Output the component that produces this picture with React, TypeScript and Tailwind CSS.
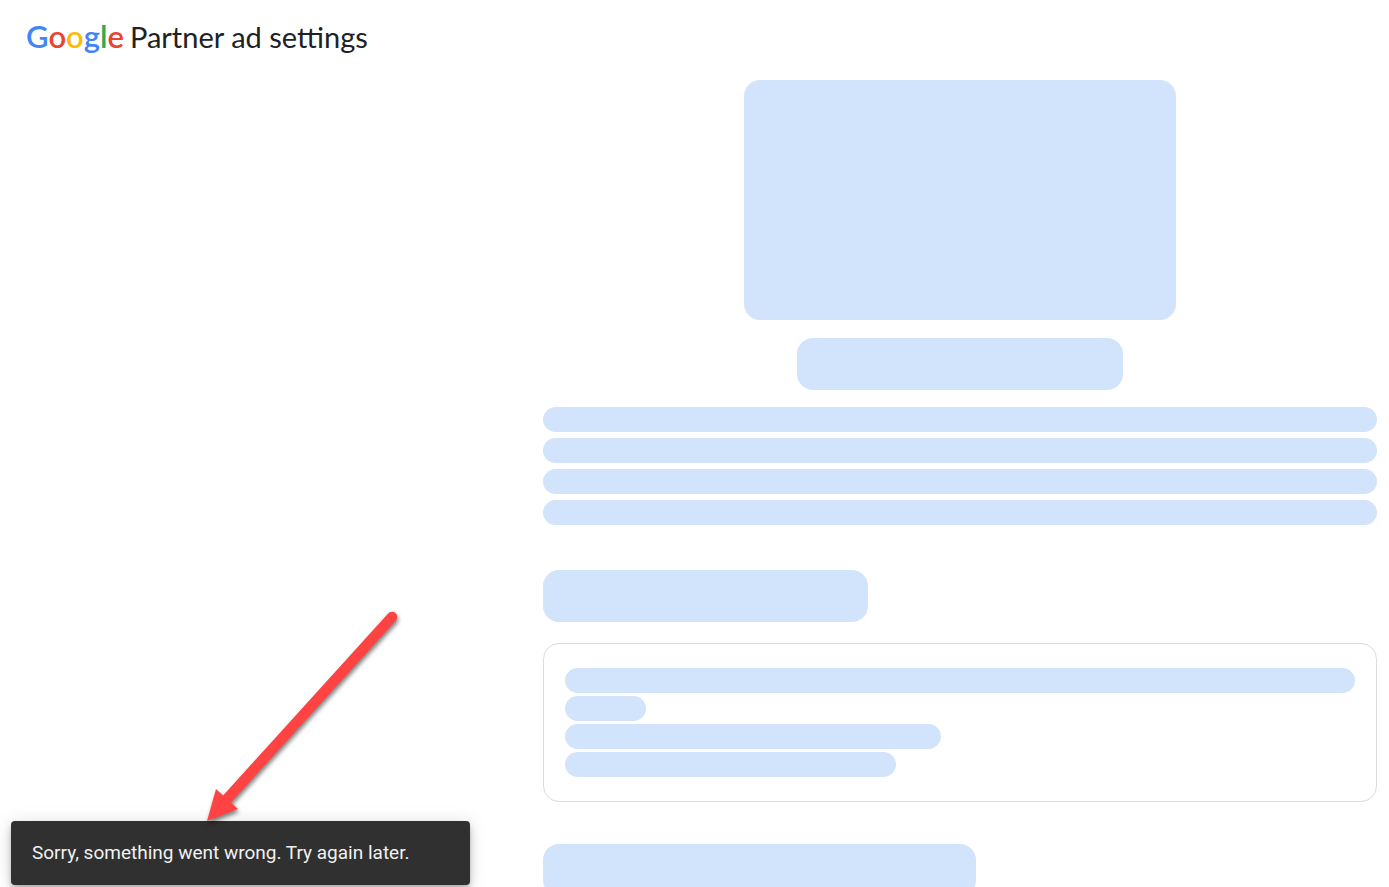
import clsx from 'clsx';

interface SkeletonProps {
  className?: string;
}

const LOGO_LETTERS = [
  { char: 'G', color: 'text-[#4285f4]' },
  { char: 'o', color: 'text-[#ea4335]' },
  { char: 'o', color: 'text-[#fbbc05]' },
  { char: 'g', color: 'text-[#4285f4]' },
  { char: 'l', color: 'text-[#34a853]' },
  { char: 'e', color: 'text-[#ea4335]' },
];

function Block({ className }: SkeletonProps) {
  return <div className={clsx('h-[52px] rounded-2xl bg-[#d2e3fc]', className)} />;
}

function Line({ className }: SkeletonProps) {
  return <div className={clsx('h-[25px] rounded-full bg-[#d2e3fc]', className)} />;
}

function Header() {
  return (
    <header className="h-[60px] px-[26px] pt-4">
      <a href="#" className="inline-flex items-baseline gap-[6px] leading-10">
        <span className="text-[31px] font-semibold">
          {LOGO_LETTERS.map((letter, i) => (
            <span key={i} className={letter.color}>
              {letter.char}
            </span>
          ))}
        </span>
        <span className="text-[29px] text-[#202124]">Partner ad settings</span>
      </a>
    </header>
  );
}

function LoadingContent() {
  return (
    <main className="mt-5 mr-3 ml-auto w-[calc(60%+1px)]" aria-busy="true">
      <div className="mx-auto h-60 w-[432px] max-w-full rounded-2xl bg-[#d2e3fc]" />
      <Block className="mx-auto mt-[18px] w-[39%]" />

      <div className="mt-[17px] flex flex-col gap-[6px]">
        <Line />
        <Line />
        <Line />
        <Line />
      </div>

      <Block className="mt-[45px] w-[39%]" />

      <div className="mt-[21px] flex flex-col gap-[3px] rounded-2xl border border-[#dadce0] px-[21px] py-6">
        <Line />
        <Line className="w-[81px]" />
        <Line className="w-[376px]" />
        <Line className="w-[331px]" />
      </div>

      <Block className="mt-[42px] w-[52%]" />
    </main>
  );
}

function Arrow() {
  return (
    <svg
      className="pointer-events-none absolute bottom-[52px] left-[200px] z-10 h-[230px] w-[210px] drop-shadow-[1px_3px_2px_rgba(0,0,0,0.5)]"
      viewBox="0 0 210 230"
      aria-hidden="true"
    >
      <path d="M192 12 L27 194" stroke="#ff4343" strokeWidth="10.5" strokeLinecap="round" />
      <path d="M7 216 L16 184 L38 204 Z" fill="#ff4343" />
    </svg>
  );
}

function Toast() {
  return (
    <div
      role="alert"
      className="absolute bottom-[2px] left-[11px] flex h-16 w-[459px] items-center rounded bg-[#303030] px-[21px] font-[Roboto,sans-serif] text-[19px] text-[#f1f1f1] shadow-[0_3px_5px_-1px_rgba(0,0,0,0.2),0_6px_10px_0_rgba(0,0,0,0.14),0_1px_18px_0_rgba(0,0,0,0.12)]"
    >
      Sorry, something went wrong. Try again later.
    </div>
  );
}

export default function App() {
  return (
    <div className="relative h-screen overflow-hidden bg-white font-[Lato,sans-serif]">
      <Header />
      <LoadingContent />
      <Toast />
      <Arrow />
    </div>
  );
}
